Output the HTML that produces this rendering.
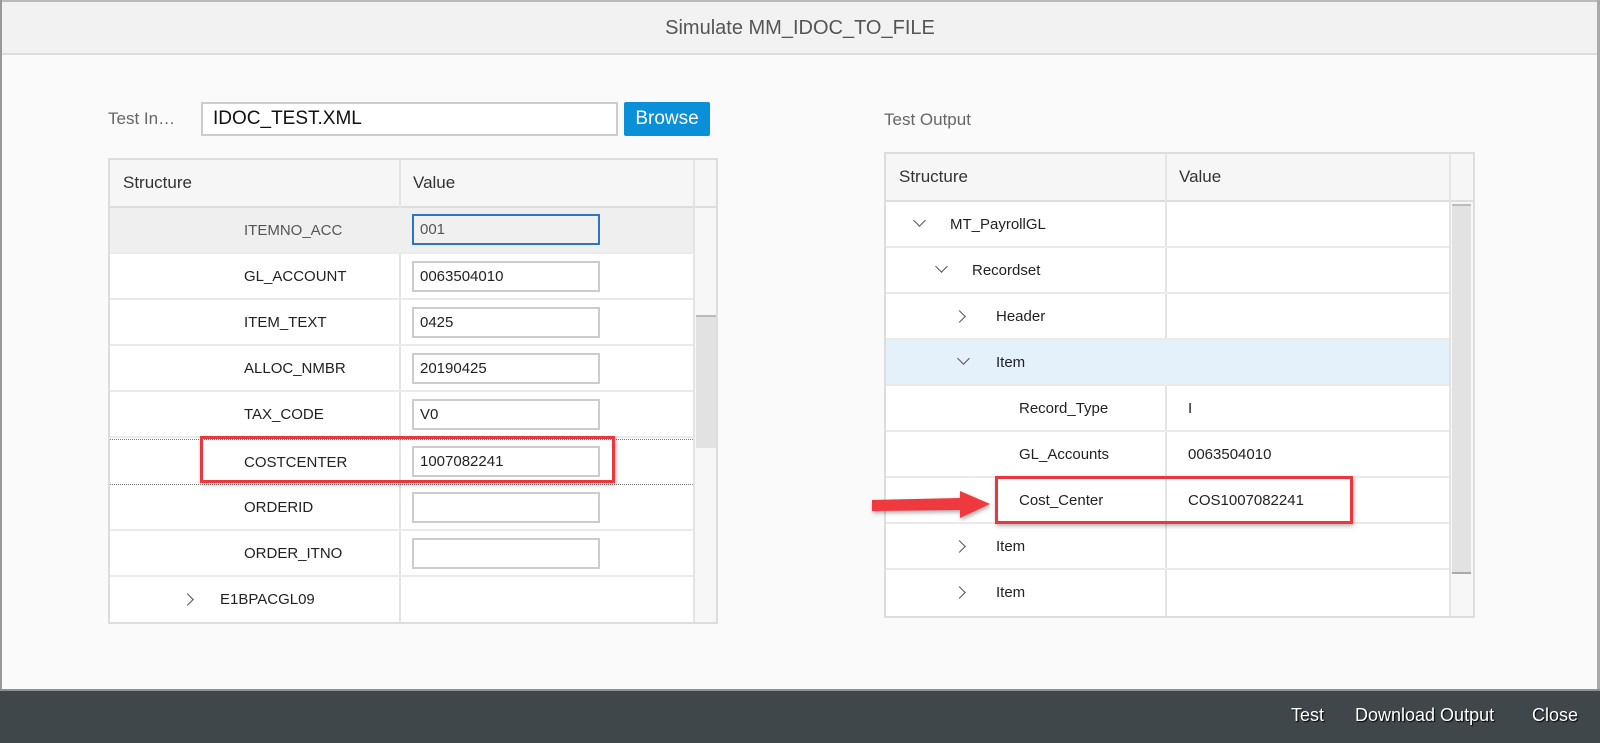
<!DOCTYPE html>
<html><head><meta charset="utf-8"><style>
*{box-sizing:border-box;margin:0;padding:0}
body{width:1600px;height:743px;overflow:hidden;background:#fafafa;font-family:"Liberation Sans",Arial,sans-serif;position:relative;color:#333}
.abs{position:absolute}
.hdr{left:0;top:0;width:1600px;height:55px;background:#f2f2f2;border-top:2px solid #bbb;border-bottom:2px solid #ddd;text-align:center;font-size:20px;color:#555;line-height:52px}
.lb{left:0;top:0;width:2px;height:743px;background:#999}
.rb{right:0;top:0;width:3px;height:743px;background:#aaa}
.tbl{background:#fff;border:2px solid #ddd}
.th{background:#f6f6f6;border-bottom:2px solid #ddd;font-size:17px;color:#333}
.row{position:absolute;left:0;height:46px;border-bottom:2px solid #eaeaea;font-size:15px;color:#222}
.row span{position:absolute;top:14px}
.inp{position:absolute;height:31px;border:2px solid #ccc;background:#fff;font-size:15px;padding:5px 6px;color:#222}
.vd{position:absolute;top:0;width:2px;background:#e4e4e4}
.chev{position:absolute;width:9px;height:9px;border-right:1.8px solid #555;border-bottom:1.8px solid #555}
.down{transform:rotate(45deg)}
.right{transform:rotate(-45deg)}
.red{position:absolute;border:3px solid #e8383d;box-shadow:1px 2px 4px rgba(0,0,0,.3)}
.ft{left:0;top:689px;width:1600px;height:54px;background:#3f474b;border-top:2px solid #8a9296}
.ft span{position:absolute;top:14px;color:#fff;font-size:18px;text-shadow:1px 1px 1px #000}
</style></head><body>
<div class="abs hdr">Simulate MM_IDOC_TO_FILE</div>
<div class="abs lb"></div><div class="abs rb"></div>

<div class="abs" style="left:108px;top:109px;font-size:17px;color:#666">Test In…</div>
<div class="abs" style="left:201px;top:102px;width:417px;height:34px;border:2px solid #ccc;background:#fff;font-size:19px;padding:4px 10px;color:#111">IDOC_TEST.XML</div>
<div class="abs" style="left:624px;top:102px;width:86px;height:34px;background:#0a8fd9;border-radius:2px;color:#fff;font-size:19px;text-align:center;line-height:34px">Browse</div>

<!-- left table -->
<div class="abs tbl" style="left:108px;top:158px;width:610px;height:466px;overflow:hidden">
 <div class="abs th" style="left:0;top:0;width:606px;height:48px"><span class="abs" style="left:13px;top:13px">Structure</span><span class="abs" style="left:303px;top:13px">Value</span></div>
 <div class="vd" style="left:289px;height:466px"></div>
 <div class="vd" style="left:583px;height:466px"></div>
 <div class="abs" style="left:585px;top:48px;width:21px;height:416px;background:#f7f7f7"></div>
 <div class="abs" style="left:586px;top:155px;width:21px;height:133px;background:#e2e2e2;border-top:2px solid #bbb"></div>
 <div style="position:absolute;left:0;top:48px;width:583px">
  <div class="row" style="top:0;width:583px;background:#efefef"><span style="left:134px;color:#555">ITEMNO_ACC</span><div class="inp" style="left:302px;top:6px;width:188px;border-color:#2d74c4;background:#f0f0f0;color:#555">001</div></div>
  <div class="row" style="top:46px;width:583px"><span style="left:134px">GL_ACCOUNT</span><div class="inp" style="left:302px;top:7px;width:188px">0063504010</div></div>
  <div class="row" style="top:92px;width:583px"><span style="left:134px">ITEM_TEXT</span><div class="inp" style="left:302px;top:7px;width:188px">0425</div></div>
  <div class="row" style="top:138px;width:583px"><span style="left:134px">ALLOC_NMBR</span><div class="inp" style="left:302px;top:7px;width:188px">20190425</div></div>
  <div class="row" style="top:184px;width:583px"><span style="left:134px">TAX_CODE</span><div class="inp" style="left:302px;top:7px;width:188px">V0</div></div>
  <div class="row" style="top:231px;width:583px;border-top:1px dotted #777;border-bottom:1px dotted #777"><span style="left:134px">COSTCENTER</span><div class="inp" style="left:302px;top:6px;width:188px">1007082241</div></div>
  <div class="row" style="top:277px;width:583px"><span style="left:134px">ORDERID</span><div class="inp" style="left:302px;top:7px;width:188px"></div></div>
  <div class="row" style="top:323px;width:583px"><span style="left:134px">ORDER_ITNO</span><div class="inp" style="left:302px;top:7px;width:188px"></div></div>
  <div class="row" style="top:369px;width:583px;border:none"><div class="chev right" style="left:73px;top:18px"></div><span style="left:110px">E1BPACGL09</span></div>
 </div>
</div>
<div class="red" style="left:200px;top:436px;width:415px;height:47px"></div>

<!-- right -->
<div class="abs" style="left:884px;top:110px;font-size:17px;color:#666">Test Output</div>
<div class="abs tbl" style="left:884px;top:152px;width:591px;height:466px;overflow:hidden">
 <div class="abs th" style="left:0;top:0;width:587px;height:48px"><span class="abs" style="left:13px;top:13px">Structure</span><span class="abs" style="left:293px;top:13px">Value</span></div>
 <div class="vd" style="left:279px;height:466px"></div>
 <div class="vd" style="left:563px;height:466px"></div>
 <div class="abs" style="left:565px;top:48px;width:22px;height:416px;background:#f7f7f7"></div>
 <div class="abs" style="left:566px;top:50px;width:19px;height:370px;background:#e2e2e2;border-top:2px solid #bbb;border-bottom:2px solid #aaa"></div>
 <div style="position:absolute;left:0;top:48px;width:563px">
  <div class="row" style="top:0;width:563px"><div class="chev down" style="left:29px;top:14px"></div><span style="left:64px">MT_PayrollGL</span></div>
  <div class="row" style="top:46px;width:563px"><div class="chev down" style="left:51px;top:14px"></div><span style="left:86px">Recordset</span></div>
  <div class="row" style="top:92px;width:563px"><div class="chev right" style="left:69px;top:18px"></div><span style="left:110px">Header</span></div>
  <div class="row" style="top:138px;width:563px;background:#e4f0fa"><div class="chev down" style="left:73px;top:14px"></div><span style="left:110px">Item</span></div>
  <div class="row" style="top:184px;width:563px"><span style="left:133px">Record_Type</span><span style="left:302px">I</span></div>
  <div class="row" style="top:230px;width:563px"><span style="left:133px">GL_Accounts</span><span style="left:302px">0063504010</span></div>
  <div class="row" style="top:276px;width:563px"><span style="left:133px">Cost_Center</span><span style="left:302px">COS1007082241</span></div>
  <div class="row" style="top:322px;width:563px"><div class="chev right" style="left:69px;top:18px"></div><span style="left:110px">Item</span></div>
  <div class="row" style="top:368px;width:563px;border:none"><div class="chev right" style="left:69px;top:18px"></div><span style="left:110px">Item</span></div>
 </div>
</div>
<div class="red" style="left:995px;top:476px;width:358px;height:48px"></div>
<svg class="abs" style="left:868px;top:490px" width="126" height="32"><path d="M4 10 L92 8 L92 1 L122 14 L92 28 L92 20 L4 21 Z" fill="#f0393e" style="filter:drop-shadow(1px 2px 2px rgba(0,0,0,.35))"/></svg>

<div class="abs ft"><span style="left:1291px">Test</span><span style="left:1355px">Download Output</span><span style="left:1532px">Close</span></div>
</body></html>
